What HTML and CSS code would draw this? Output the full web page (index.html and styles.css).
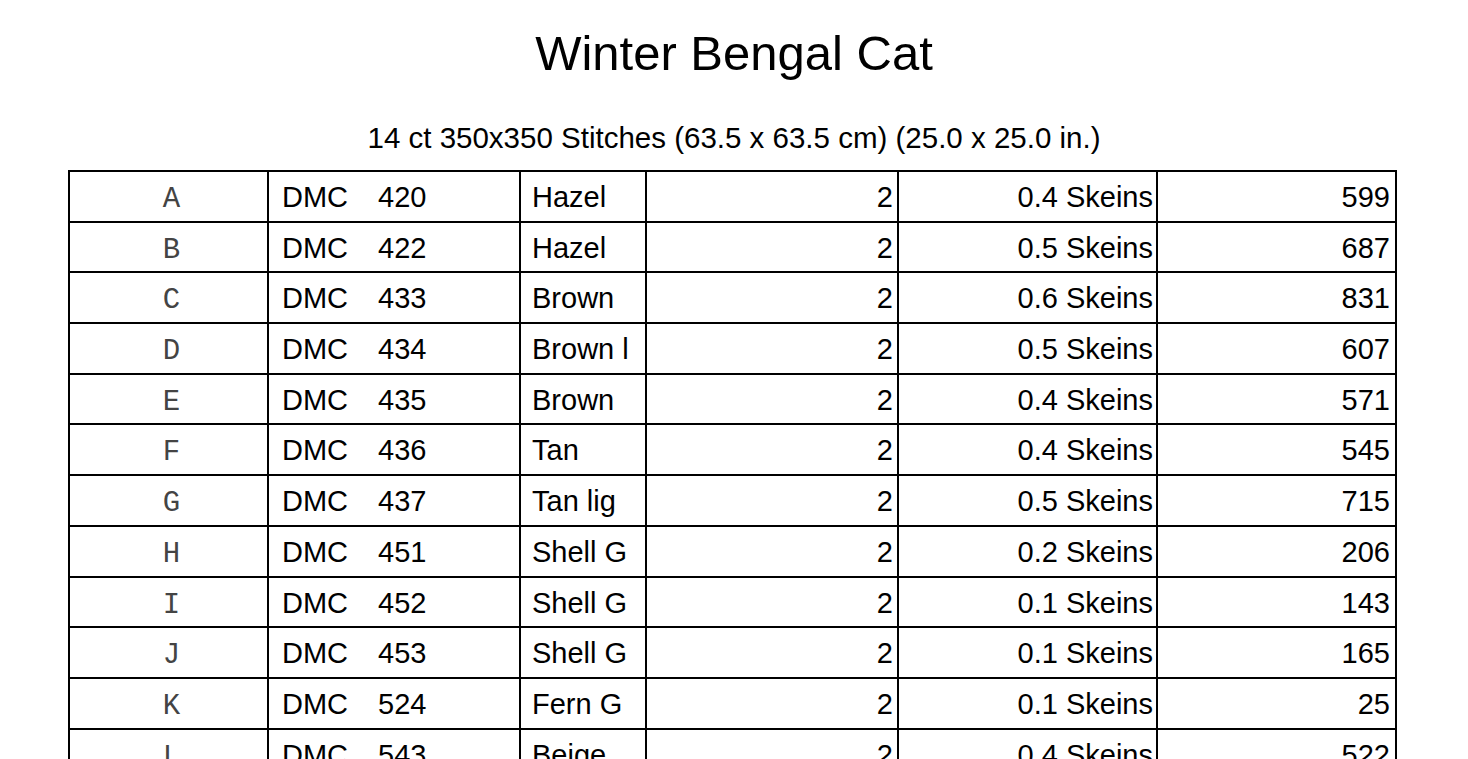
FILE: index.html
```html
<!DOCTYPE html>
<html lang="en">
<head>
<meta charset="utf-8">
<title>Winter Bengal Cat</title>
<link rel="stylesheet" href="styles.css">
</head>
<body>
<h1 class="title">Winter Bengal Cat</h1>
<p class="subtitle">14 ct 350x350 Stitches (63.5 x 63.5 cm) (25.0 x 25.0 in.)</p>
<table class="chart">
  <colgroup>
    <col class="c-sym"><col class="c-code"><col class="c-name"><col class="c-str"><col class="c-sk"><col class="c-st">
  </colgroup>
  <tbody>
    <tr><td class="sym">A</td><td class="code"><span class="brand">DMC</span>420</td><td class="name">Hazel</td><td class="num">2</td><td class="sk">0.4 Skeins</td><td class="st">599</td></tr>
    <tr><td class="sym">B</td><td class="code"><span class="brand">DMC</span>422</td><td class="name">Hazel</td><td class="num">2</td><td class="sk">0.5 Skeins</td><td class="st">687</td></tr>
    <tr><td class="sym">C</td><td class="code"><span class="brand">DMC</span>433</td><td class="name">Brown</td><td class="num">2</td><td class="sk">0.6 Skeins</td><td class="st">831</td></tr>
    <tr><td class="sym">D</td><td class="code"><span class="brand">DMC</span>434</td><td class="name">Brown l</td><td class="num">2</td><td class="sk">0.5 Skeins</td><td class="st">607</td></tr>
    <tr><td class="sym">E</td><td class="code"><span class="brand">DMC</span>435</td><td class="name">Brown</td><td class="num">2</td><td class="sk">0.4 Skeins</td><td class="st">571</td></tr>
    <tr><td class="sym">F</td><td class="code"><span class="brand">DMC</span>436</td><td class="name">Tan</td><td class="num">2</td><td class="sk">0.4 Skeins</td><td class="st">545</td></tr>
    <tr><td class="sym">G</td><td class="code"><span class="brand">DMC</span>437</td><td class="name">Tan lig</td><td class="num">2</td><td class="sk">0.5 Skeins</td><td class="st">715</td></tr>
    <tr><td class="sym">H</td><td class="code"><span class="brand">DMC</span>451</td><td class="name">Shell G</td><td class="num">2</td><td class="sk">0.2 Skeins</td><td class="st">206</td></tr>
    <tr><td class="sym">I</td><td class="code"><span class="brand">DMC</span>452</td><td class="name">Shell G</td><td class="num">2</td><td class="sk">0.1 Skeins</td><td class="st">143</td></tr>
    <tr><td class="sym">J</td><td class="code"><span class="brand">DMC</span>453</td><td class="name">Shell G</td><td class="num">2</td><td class="sk">0.1 Skeins</td><td class="st">165</td></tr>
    <tr><td class="sym">K</td><td class="code"><span class="brand">DMC</span>524</td><td class="name">Fern G</td><td class="num">2</td><td class="sk">0.1 Skeins</td><td class="st">25</td></tr>
    <tr><td class="sym">L</td><td class="code"><span class="brand">DMC</span>543</td><td class="name">Beige</td><td class="num">2</td><td class="sk">0.4 Skeins</td><td class="st">522</td></tr>
  </tbody>
</table>
</body>
</html>
```

FILE: styles.css
```css
html, body {
  margin: 0;
  padding: 0;
  background: #fff;
  color: #000;
  font-family: "Liberation Sans", Arial, sans-serif;
}

.title {
  margin: 0;
  padding-top: 25px;
  font-size: 49px;
  font-weight: normal;
  line-height: 56px;
  text-align: center;
}

.subtitle {
  margin: 40px 0 0;
  font-size: 29.5px;
  line-height: 34px;
  text-align: center;
}

.chart {
  margin: 15px 0 0 68px;
  box-sizing: border-box;
  width: 1329px;
  table-layout: fixed;
  border-collapse: separate;
  border-spacing: 0;
  border-left: 2px solid #000;
  border-top: 2px solid #000;
}

.c-sym { width: 199px; }
.c-code { width: 252px; }
.c-name { width: 126px; }
.c-str { width: 252px; }
.c-sk { width: 259px; }
.c-st { width: 239px; }

.chart td {
  box-sizing: border-box;
  height: 50.7px;
  padding: 9px 0 0;
  border-right: 2px solid #000;
  border-bottom: 2px solid #000;
  vertical-align: top;
  font-size: 29px;
  line-height: 32px;
  white-space: nowrap;
  overflow: hidden;
}

.chart td.sym {
  font-family: "Liberation Mono", "Courier New", monospace;
  font-size: 29px;
  line-height: 34px;
  color: #444;
  text-align: center;
  padding: 11px 0 0 6px;
}

.chart td.code {
  padding-left: 13px;
}

.brand {
  display: inline-block;
  width: 96px;
}

.chart td.name {
  padding-left: 11px;
}

.chart td.num {
  text-align: right;
  padding-right: 4px;
}

.chart td.sk {
  text-align: right;
  padding-right: 3px;
}

.chart td.st {
  text-align: right;
  padding-right: 5px;
}
```
